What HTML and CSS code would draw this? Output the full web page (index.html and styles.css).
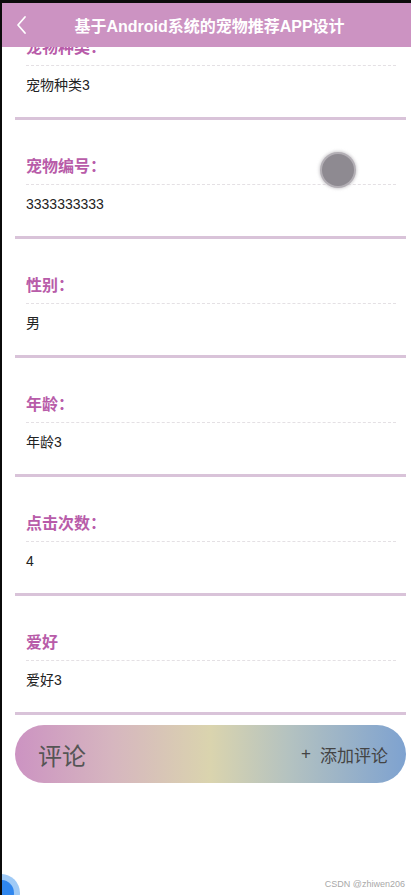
FILE: index.html
```html
<!DOCTYPE html>
<html lang="zh">
<head>
<meta charset="utf-8">
<title>宠物详情</title>
<link rel="stylesheet" href="styles.css">
</head>
<body>
<div class="screen">
  <div class="content">
    <div class="field">
      <div class="label">宠物种类：</div>
      <div class="value">宠物种类3</div>
    </div>
    <div class="field">
      <div class="label">宠物编号：</div>
      <div class="value">3333333333</div>
    </div>
    <div class="field">
      <div class="label">性别：</div>
      <div class="value">男</div>
    </div>
    <div class="field">
      <div class="label">年龄：</div>
      <div class="value">年龄3</div>
    </div>
    <div class="field">
      <div class="label">点击次数：</div>
      <div class="value">4</div>
    </div>
    <div class="field">
      <div class="label">爱好</div>
      <div class="value">爱好3</div>
    </div>
    <div class="comment-bar">
      <span class="comment-title">评论</span>
      <span class="comment-add"><span class="plus">+</span>添加评论</span>
    </div>
  </div>
  <header class="topbar">
    <svg class="back" width="14" height="20" viewBox="0 0 14 20"><polyline points="10,2 3,10 10,18" fill="none" stroke="#ffffff" stroke-width="1.8" stroke-linecap="round" stroke-linejoin="round"/></svg>
    <h1 class="title">基于Android系统的宠物推荐APP设计</h1>
  </header>
  <div class="touch-dot"></div>
  <div class="float-btn"></div>
  <div class="watermark">CSDN @zhiwen206</div>
</div>
<div class="top-strip"></div>
</body>
</html>
```

FILE: styles.css
```css
html, body {
  margin: 0;
  padding: 0;
  background: #0b0b0b;
}
body {
  font-family: "Liberation Sans", Arial, "Noto Sans CJK SC", sans-serif;
  overflow: hidden;
}
.screen {
  margin-left: 2px;
  height: 895px;
  background: #ffffff;
  position: relative;
  overflow: hidden;
}
.top-strip {
  position: fixed;
  top: 0;
  left: 0;
  right: 0;
  height: 3px;
  background: #0b0b0b;
}
.topbar {
  position: absolute;
  top: 3px;
  left: 0;
  right: 0;
  height: 44px;
  background: #cc93c2;
  display: flex;
  align-items: center;
  justify-content: center;
}
.back {
  position: absolute;
  left: 13px;
  top: 12px;
}
.title {
  margin: 0 0 0 6px;
  color: #ffffff;
  font-size: 16px;
  font-weight: bold;
}
.content {
  padding: 1px 5px 0 13px;
}
.field {
  padding: 36px 10px 22px 11px;
  border-bottom: 3px solid #d9c3d9;
}
.label {
  font-size: 16px;
  line-height: 22px;
  font-weight: bold;
  color: #b85ca9;
  padding-bottom: 6px;
  border-bottom: 1px dashed #e4e0e4;
}
.value {
  margin-top: 9px;
  font-size: 14px;
  line-height: 20px;
  color: #222222;
}
.comment-bar {
  margin-top: 10px;
  height: 58px;
  border-radius: 29px;
  background: linear-gradient(90deg, #cc93c2 0%, #d6b6bf 25%, #dad4ae 50%, #b4c2c0 70%, #7ea2d0 100%);
  display: flex;
  align-items: center;
  justify-content: space-between;
  padding: 0 18px 0 23px;
}
.comment-title {
  font-size: 24px;
  color: #555555;
}
.comment-add {
  font-size: 17px;
  color: #444444;
  display: flex;
  align-items: center;
}
.plus {
  margin-right: 9px;
}
.touch-dot {
  position: absolute;
  left: 320px;
  top: 154px;
  width: 32px;
  height: 32px;
  border-radius: 50%;
  background: #8e8a91;
  box-shadow: 0 0 0 2px #b3afb5, 0 0 3px 3px rgba(180,176,182,0.6);
}
.float-btn {
  position: absolute;
  left: -14px;
  top: 880px;
  width: 26px;
  height: 26px;
  border-radius: 50%;
  background: #2f86ee;
  box-shadow: 0 0 0 6px #9fcaf6;
}
.watermark {
  position: absolute;
  right: 6px;
  top: 879px;
  font-size: 9px;
  color: #a8a8a8;
}
```
